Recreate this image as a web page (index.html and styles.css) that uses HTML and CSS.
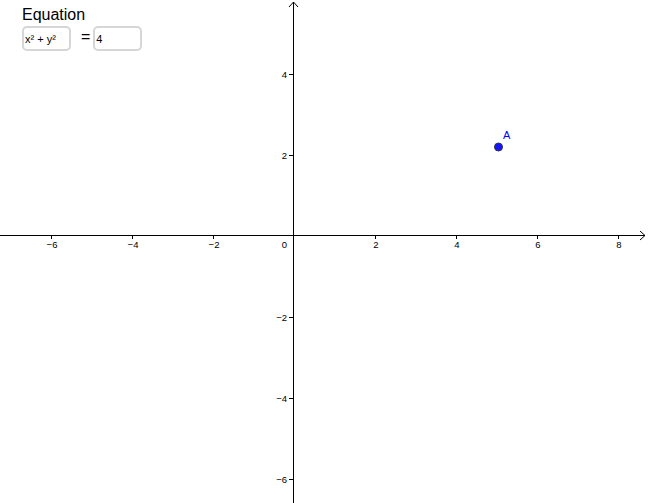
FILE: index.html
```html
<!DOCTYPE html>
<html>
<head>
<meta charset="utf-8">
<link rel="stylesheet" href="styles.css">
</head>
<body>
<div class="app">
  <svg class="graph" width="648" height="503" viewBox="0 0 648 503">
    <g stroke="#000" stroke-width="1" fill="none">
      <line x1="0" y1="235.5" x2="645" y2="235.5"/>
      <polyline points="640,231 645,235.5 640,240"/>
      <line x1="293.5" y1="503" x2="293.5" y2="2"/>
      <polyline points="289,7 293.5,2 298,7"/>
      <line x1="51.5" y1="235" x2="51.5" y2="239"/>
      <line x1="132.5" y1="235" x2="132.5" y2="239"/>
      <line x1="213.5" y1="235" x2="213.5" y2="239"/>
      <line x1="375.5" y1="235" x2="375.5" y2="239"/>
      <line x1="456.5" y1="235" x2="456.5" y2="239"/>
      <line x1="537.5" y1="235" x2="537.5" y2="239"/>
      <line x1="618.5" y1="235" x2="618.5" y2="239"/>
      <line x1="289" y1="74.5" x2="293" y2="74.5"/>
      <line x1="289" y1="155.5" x2="293" y2="155.5"/>
      <line x1="289" y1="317.5" x2="293" y2="317.5"/>
      <line x1="289" y1="398.5" x2="293" y2="398.5"/>
      <line x1="289" y1="479.5" x2="293" y2="479.5"/>
    </g>
    <g class="ticks" text-anchor="middle">
      <text x="52" y="248">−6</text>
      <text x="133" y="248">−4</text>
      <text x="214" y="248">−2</text>
      <text x="376" y="248">2</text>
      <text x="457" y="248">4</text>
      <text x="538" y="248">6</text>
      <text x="619" y="248">8</text>
    </g>
    <g class="ticks" text-anchor="end">
      <text x="287" y="248">0</text>
      <text x="287" y="78">4</text>
      <text x="287" y="159">2</text>
      <text x="287" y="321">−2</text>
      <text x="287" y="402">−4</text>
      <text x="287" y="483">−6</text>
    </g>
    <circle cx="498.5" cy="147" r="4" fill="#1414ff" stroke="#333" stroke-width="1"/>
    <text class="plabel" x="503" y="139">A</text>
  </svg>
  <div class="panel">
    <div class="title">Equation</div>
    <div class="row">
      <div class="box"><span class="lhs">x² + y²</span></div>
      <span class="eq">=</span>
      <div class="box"><span class="rhs">4</span></div>
    </div>
  </div>
</div>
</body>
</html>
```
FILE: styles.css
```css
html, body {
  margin: 0;
  padding: 0;
  background: #fff;
  font-family: "Liberation Sans", Arial, sans-serif;
}
.app {
  position: relative;
  width: 648px;
  height: 503px;
  overflow: hidden;
}
.graph {
  position: absolute;
  left: 0;
  top: 0;
}
.ticks {
  font-family: "Liberation Sans", Arial, sans-serif;
  font-size: 9.5px;
  fill: #000;
}
.plabel {
  font-family: "Liberation Sans", Arial, sans-serif;
  font-size: 11px;
  fill: #0000ff;
}
.panel {
  position: absolute;
  left: 22px;
  top: 5px;
}
.title {
  font-size: 16px;
  line-height: 19px;
  color: #000;
}
.row {
  display: flex;
  align-items: center;
  margin-top: 2px;
}
.box {
  box-sizing: border-box;
  width: 49px;
  height: 25px;
  border: 2px solid #d6d6d6;
  border-radius: 5px;
  background: #fff;
  display: flex;
  align-items: center;
  padding-left: 1px;
}
.lhs {
  font-size: 11px;
  color: #000;
}
.rhs {
  font-size: 11px;
  color: #000;
}
.eq {
  font-size: 16px;
  margin: -4px 3px 0 10px;
}
```
